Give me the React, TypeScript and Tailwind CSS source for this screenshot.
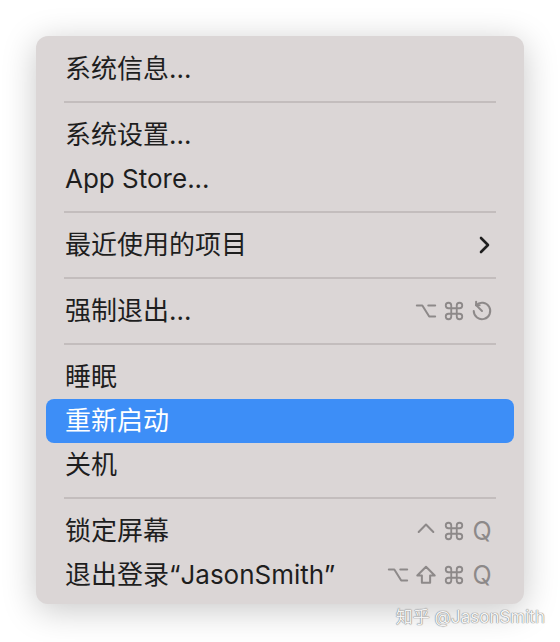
import React from "react";

const font = { fontFamily: '"Inter", "Noto Sans CJK SC", sans-serif' };

const sv = {
  width: 22,
  height: 22,
  viewBox: "0 0 24 24",
  fill: "none",
  stroke: "currentColor",
  strokeWidth: 2.2,
  strokeLinecap: "round" as const,
  strokeLinejoin: "round" as const,
};

const OptionKey = () => (
  <svg {...sv}>
    <path d="M2 6 H8 L15.5 18 H22" />
    <path d="M14.5 6 H22" />
  </svg>
);

const CmdKey = () => (
  <svg {...sv} strokeWidth={2}>
    <path d="M15 6v12a3 3 0 1 0 3-3H6a3 3 0 1 0 3 3V6a3 3 0 1 0-3 3h12a3 3 0 1 0-3-3" />
  </svg>
);

const CtrlKey = () => (
  <svg {...sv}>
    <path d="M4 13 L12 5 L20 13" />
  </svg>
);

const ShiftKey = () => (
  <svg {...sv}>
    <path d="M12 3 L21.5 12.5 H16.5 V20.5 H7.5 V12.5 H2.5 Z" />
  </svg>
);

const RestartKey = () => (
  <svg {...sv} width={24} height={24}>
    <path d="M5.6 5.6 A9 9 0 1 1 3 12" />
    <path d="M5.6 5.6 L5.6 1.8" />
    <path d="M5.6 5.6 L9.4 5.6" />
    <path d="M5.6 5.6 L12 12" />
  </svg>
);

const Q = () => <span className="text-[25px] leading-none">Q</span>;

function Keys({ keys }: { keys: React.ReactNode[] }) {
  return (
    <div className="flex items-center gap-[6px] text-[#8d8989]">
      {keys.map((k, i) => (
        <span key={i} className="w-[22px] flex justify-center">
          {k}
        </span>
      ))}
    </div>
  );
}

function Item({ label, active, right }: { label: string; active?: boolean; right?: React.ReactNode }) {
  return (
    <div
      className={
        "h-[44px] flex items-center justify-between pl-[19px] pr-[21px] rounded-[8px] " +
        (active ? "bg-[#3d8ef7] text-white" : "text-[#1e1e1e]")
      }
    >
      <span className="text-[26px] leading-none">{label}</span>
      {right}
    </div>
  );
}

function Divider() {
  return (
    <div className="h-[22px] flex items-center px-[18px]">
      <div className="h-[2px] w-full bg-[#c3bdbd]" />
    </div>
  );
}

export default function App() {
  return (
    <div className="w-[560px] h-[642px] bg-white relative overflow-hidden" style={font}>
      <div className="pt-[36px] pl-[36px]">
        <div className="w-[488px] h-[568px] bg-[#dbd6d6] rounded-[12px] px-[10px] pt-[11px] shadow-[0_6px_34px_rgba(0,0,0,0.22)]">
          <Item label="系统信息..." />
          <Divider />
          <Item label="系统设置..." />
          <Item label="App Store..." />
          <Divider />
          <Item
            label="最近使用的项目"
            right={
              <svg width="16" height="18" viewBox="0 0 16 18" fill="none" stroke="#1e1e1e" strokeWidth="2.6" strokeLinecap="round" strokeLinejoin="round">
                <path d="M4 2 L11 9 L4 16" />
              </svg>
            }
          />
          <Divider />
          <Item label="强制退出..." right={<Keys keys={[<OptionKey key="o" />, <CmdKey key="c" />, <RestartKey key="r" />]} />} />
          <Divider />
          <Item label="睡眠" />
          <Item label="重新启动" active />
          <Item label="关机" />
          <Divider />
          <Item label="锁定屏幕" right={<Keys keys={[<CtrlKey key="t" />, <CmdKey key="c" />, <Q key="q" />]} />} />
          <Item
            label="退出登录“JasonSmith”"
            right={<Keys keys={[<OptionKey key="o" />, <ShiftKey key="s" />, <CmdKey key="c" />, <Q key="q" />]} />}
          />
        </div>
      </div>
      <div className="absolute right-[15px] bottom-[12px] text-[17px] text-[#f4f4f4] [text-shadow:0_0_1px_#777,0_0_1px_#777]">
        知乎 @JasonSmith
      </div>
    </div>
  );
}
